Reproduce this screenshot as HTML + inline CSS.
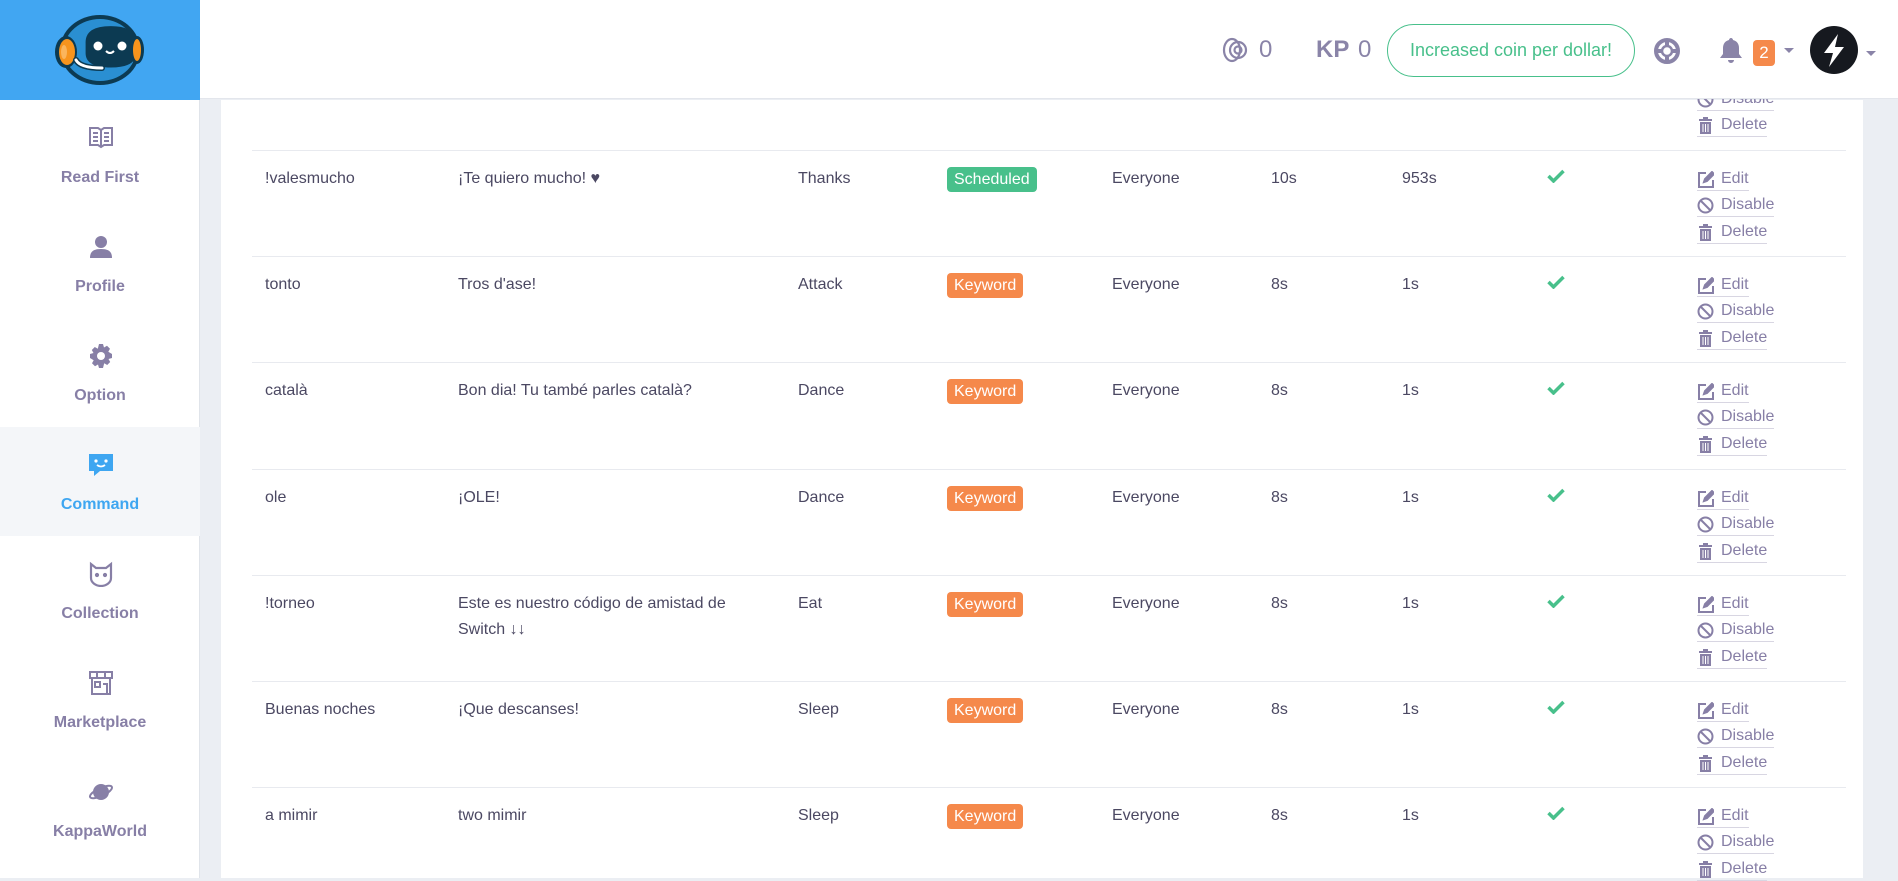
<!DOCTYPE html>
<html><head><meta charset="utf-8"><style>
*{margin:0;padding:0;box-sizing:border-box}
body{width:1898px;height:878px;overflow:hidden;background:#ebeef3;font-family:"Liberation Sans",sans-serif;position:relative;color:#4b4862}
.hdr{position:absolute;left:0;top:0;width:1898px;height:99px;background:#fff;border-bottom:1px solid #e3e6ec;z-index:5}
.logo{position:absolute;left:0;top:0;width:200px;height:100px;background:#41a6f2;z-index:6}
.side{position:absolute;left:0;top:100px;width:200px;height:778px;background:#fff;border-right:1px solid #e0e4ea}
.item{position:absolute;left:0;width:200px;height:109px;text-align:center;color:#877fa6;font-size:16px;font-weight:bold}
.item .lb{position:absolute;left:0;right:0;top:69px}
.item svg{position:absolute;left:88px;top:25px}
.item.act{background:#f4f6f9;color:#3ea6f1}
.card{position:absolute;left:221px;top:100px;width:1642px;height:778px;background:#fff}
.line{position:absolute;left:252px;width:1594px;height:1px;background:#e8eaef}
.t{position:absolute;font-size:16px;white-space:nowrap}
.b{position:absolute;height:25px;line-height:25px;color:#fff;font-size:16px;border-radius:4px;padding:0 7px}
.a{position:absolute;font-size:16px;color:#877fa6;border-bottom:1px solid #d8d6e2;padding-left:24px;line-height:22px}
.a svg{position:absolute;left:0;top:3px}
.ck{position:absolute}
</style></head><body>
<div class="card"></div>
<div class="side">
<div class="item" style="top:0"><svg width="26" height="24" viewBox="0 0 26 24" fill="none" stroke="#877fa6" stroke-width="2"><path d="M2 3h8l3 2 3-2h8v17h-8l-3 2-3-2H2z"/><path d="M13 5v17M5 8h5M5 12h5M5 16h5M16 8h5M16 12h5M16 16h5"/></svg><div class="lb">Read First</div></div>
<div class="item" style="top:109px"><svg width="26" height="24" viewBox="0 0 26 24" fill="#877fa6"><circle cx="13" cy="8" r="6"/><path d="M2 24c0-7 4-9 11-9s11 2 11 9z"/></svg><div class="lb">Profile</div></div>
<div class="item" style="top:218px"><svg width="26" height="26" viewBox="0 0 26 26"><path d="M11 1h4l1 3.5 3-1.7 3 3-1.7 3L24 11v4l-3.5 1 1.7 3-3 3-3-1.7L15 25h-4l-1-3.5-3 1.7-3-3 1.7-3L2 15v-4l3.5-1-1.7-3 3-3 3 1.7z" fill="#877fa6"/><circle cx="13" cy="13" r="4" fill="#fff"/></svg><div class="lb">Option</div></div>
<div class="item act" style="top:327px"><svg width="26" height="26" viewBox="0 0 26 26"><path d="M1 2h24v17H12l-6 5v-5H1z" fill="#3ea6f1"/><circle cx="8" cy="9" r="1.6" fill="#fff"/><circle cx="18" cy="9" r="1.6" fill="#fff"/><path d="M9 13q4 3 8 0" stroke="#fff" stroke-width="1.8" fill="none"/></svg><div class="lb">Command</div></div>
<div class="item" style="top:436px"><svg width="26" height="26" viewBox="0 0 26 26" fill="none" stroke="#877fa6" stroke-width="2.2"><path d="M3 3l5 4h10l5-4v14a10 8 0 0 1-20 0z"/><circle cx="9" cy="14" r="1" fill="#877fa6"/><circle cx="17" cy="14" r="1" fill="#877fa6"/></svg><div class="lb">Collection</div></div>
<div class="item" style="top:545px"><svg width="26" height="26" viewBox="0 0 26 26" fill="none" stroke="#877fa6" stroke-width="2"><path d="M2 2h22v6H2zM4 8v16h18V8M7 12h5v5H7zM15 14h4v10"/><path d="M9 2v6M17 2v6"/></svg><div class="lb">Marketplace</div></div>
<div class="item" style="top:654px"><svg width="26" height="26" viewBox="0 0 26 26"><circle cx="13" cy="13" r="8" fill="#877fa6"/><ellipse cx="13" cy="13" rx="12" ry="4" fill="none" stroke="#877fa6" stroke-width="2" transform="rotate(-25 13 13)"/></svg><div class="lb">KappaWorld</div></div>
</div>
<div class="hdr">
<svg style="position:absolute;left:1222px;top:37px" width="26" height="26" viewBox="0 0 26 26" fill="none" stroke="#8a84a8" stroke-width="2.2"><ellipse cx="10" cy="13" rx="8" ry="11"/><circle cx="16" cy="13" r="8"/><circle cx="16" cy="13" r="3.5"/></svg>
<div class="t" style="left:1259px;top:36px;font-size:24px;color:#8a84a8">0</div>
<div class="t" style="left:1316px;top:36px;font-size:24px;color:#8a84a8;font-weight:bold">KP</div>
<div class="t" style="left:1358px;top:36px;font-size:24px;color:#8a84a8">0</div>
<div style="position:absolute;left:1387px;top:24px;width:248px;height:53px;border:1.5px solid #48c08b;border-radius:27px;color:#48c08b;font-size:18px;text-align:center;line-height:50px">Increased coin per dollar!</div>
<svg style="position:absolute;left:1654px;top:38px" width="26" height="26" viewBox="0 0 26 26"><circle cx="13" cy="13" r="11" fill="none" stroke="#8a84a8" stroke-width="4"/><circle cx="13" cy="13" r="5" fill="none" stroke="#8a84a8" stroke-width="2.5"/><path d="M13 2v6M13 18v6M2 13h6M18 13h6" stroke="#8a84a8" stroke-width="4"/></svg>
<svg style="position:absolute;left:1719px;top:37px" width="24" height="26" viewBox="0 0 24 26" fill="#8a84a8"><path d="M12 1c1 0 2 1 2 2 4 1 6 4 6 8v6l3 4H1l3-4v-6c0-4 2-7 6-8 0-1 1-2 2-2zM9 23h6a3 3 0 0 1-6 0z"/></svg>
<div style="position:absolute;left:1753px;top:40px;width:22px;height:26px;background:#f5894b;color:#fff;border-radius:4px;text-align:center;line-height:26px;font-size:17px">2</div>
<div style="position:absolute;left:1784px;top:48px;border:5px solid transparent;border-top-color:#8a84a8"></div>
<div style="position:absolute;left:1810px;top:26px;width:48px;height:48px;border-radius:50%;background:#16191f"><svg width="48" height="48" viewBox="0 0 48 48"><path d="M28 8L14 27h9l-4 14 15-20h-9z" fill="#fff"/></svg></div>
<div style="position:absolute;left:1866px;top:51px;border:5px solid transparent;border-top-color:#8a84a8"></div>
</div>
<div class="logo"><svg width="200" height="100" viewBox="0 0 200 100">
<ellipse cx="100" cy="50" rx="40" ry="35" fill="#0c3a52"/><ellipse cx="100" cy="50" rx="36" ry="31" fill="#2a8fd2"/>
<path d="M72 42q0-18 28-18q28 0 28 18v12q0 16-28 16q-28 0-28-16z" fill="#0c3a52" transform="translate(10 0) scale(.9) translate(12 5)"/>
<circle cx="98" cy="46" r="4.5" fill="#fff"/><circle cx="122" cy="46" r="4.5" fill="#fff"/><path d="M106 51q4 4 8 0" stroke="#fff" stroke-width="2" fill="none"/>
<ellipse cx="66" cy="52" rx="11" ry="16" fill="#0c3a52"/><ellipse cx="67" cy="52" rx="8" ry="13" fill="#f7941d"/><ellipse cx="64" cy="52" rx="3" ry="7" fill="#fbb55c"/>
<ellipse cx="137" cy="50" rx="7" ry="14" fill="#0c3a52"/><ellipse cx="137" cy="50" rx="4" ry="11" fill="#f7941d"/>
<path d="M76 60q4 8 26 8" stroke="#0c3a52" stroke-width="6" fill="none" stroke-linecap="round"/><path d="M76 60q4 8 26 8" stroke="#fff" stroke-width="3" fill="none" stroke-linecap="round"/>
</svg></div>

<div class="a" style="left:1697px;top:88px">Disable<svg width="17" height="17" viewBox="0 0 17 17" fill="none" stroke="#877fa6" stroke-width="2"><circle cx="8.5" cy="8.5" r="7"/><path d="M3.5 3.5l10 10"/></svg></div>
<div class="a" style="left:1697px;top:114px">Delete<svg width="17" height="17" viewBox="0 0 17 17" fill="#877fa6"><path d="M2 2h13v2H2zM6 0h5v2H6zM3 5h11v12H3z"/><path d="M6 7v8M8.5 7v8M11 7v8" stroke="#fff" stroke-width="1"/></svg></div>

<div id="rows"></div>
<script>
var rows=[["!valesmucho","¡Te quiero mucho! ♥","Thanks","Scheduled","10s","953s"],
["tonto","Tros d'ase!","Attack","Keyword","8s","1s"],
["català","Bon dia! Tu també parles català?","Dance","Keyword","8s","1s"],
["ole","¡OLE!","Dance","Keyword","8s","1s"],
["!torneo","Este es nuestro código de amistad de<br>Switch ↓↓","Eat","Keyword","8s","1s"],
["Buenas noches","¡Que descanses!","Sleep","Keyword","8s","1s"],
["a mimir","two mimir","Sleep","Keyword","8s","1s"]];
var h='';
var ed='<svg width="17" height="17" viewBox="0 0 17 17" fill="none" stroke="#877fa6" stroke-width="2"><path d="M9 2H2v14h14V9"/><path d="M7 11l1-3 7-7 2 2-7 7z" fill="#877fa6"/></svg>';
var di='<svg width="17" height="17" viewBox="0 0 17 17" fill="none" stroke="#877fa6" stroke-width="2"><circle cx="8.5" cy="8.5" r="7"/><path d="M3.5 3.5l10 10"/></svg>';
var de='<svg width="17" height="17" viewBox="0 0 17 17" fill="#877fa6"><path d="M2 2h13v2H2zM6 0h5v2H6zM3 5h11v12H3z"/><path d="M6 7v8M8.5 7v8M11 7v8" stroke="#fff" stroke-width="1"/></svg>';
var ck='<svg width="18" height="14" viewBox="0 0 18 14"><path d="M1.5 7l5 5L16.5 2" stroke="#48c08b" stroke-width="3.5" fill="none"/></svg>';
rows.forEach(function(r,i){
 var y=150+i*106.2;
 h+='<div class="line" style="top:'+Math.round(y)+'px"></div>';
 var ty=Math.round(y+20);
 h+='<div class="t" style="left:265px;top:'+ty+'px">'+r[0]+'</div>';
 h+='<div class="t" style="left:458px;top:'+ty+'px;line-height:26px;margin-top:-4px">'+r[1]+'</div>';
 h+='<div class="t" style="left:798px;top:'+ty+'px">'+r[2]+'</div>';
 h+='<div class="b" style="left:947px;top:'+(ty-3)+'px;background:'+(r[3]=='Scheduled'?'#48c08b':'#f5894b')+'">'+r[3]+'</div>';
 h+='<div class="t" style="left:1112px;top:'+ty+'px">Everyone</div>';
 h+='<div class="t" style="left:1271px;top:'+ty+'px">'+r[4]+'</div>';
 h+='<div class="t" style="left:1402px;top:'+ty+'px">'+r[5]+'</div>';
 h+='<div class="ck" style="left:1547px;top:'+(ty-1)+'px">'+ck+'</div>';
 h+='<div class="a" style="left:1697px;top:'+(ty-2)+'px">Edit'+ed+'</div>';
 h+='<div class="a" style="left:1697px;top:'+(ty+24)+'px">Disable'+di+'</div>';
 h+='<div class="a" style="left:1697px;top:'+(ty+51)+'px">Delete'+de+'</div>';
});
document.getElementById('rows').innerHTML=h;
</script>
</body></html>
